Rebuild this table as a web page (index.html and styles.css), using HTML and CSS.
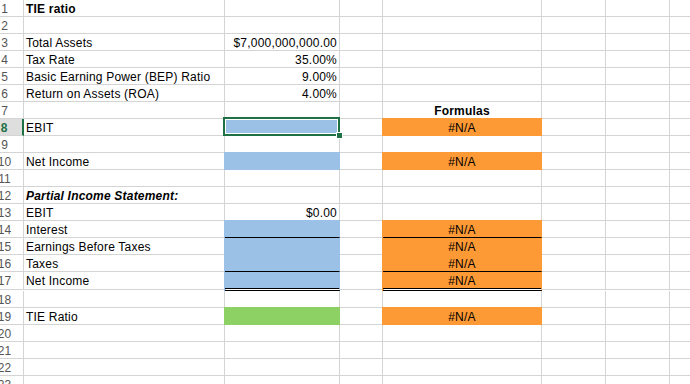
FILE: index.html
```html
<!DOCTYPE html>
<html>
<head>
<meta charset="utf-8">
<title>TIE ratio</title>
<link rel="stylesheet" href="styles.css">
</head>
<body>
<div class="sheet">
  <div class="row"><div class="h">1</div><div class="c b">TIE ratio</div><div class="c"></div><div class="c"></div><div class="c"></div><div class="c"></div><div class="c"></div><div class="c"></div></div>
  <div class="row"><div class="h">2</div><div class="c"></div><div class="c"></div><div class="c"></div><div class="c"></div><div class="c"></div><div class="c"></div><div class="c"></div></div>
  <div class="row"><div class="h">3</div><div class="c">Total Assets</div><div class="c num">$7,000,000,000.00</div><div class="c"></div><div class="c"></div><div class="c"></div><div class="c"></div><div class="c"></div></div>
  <div class="row"><div class="h">4</div><div class="c">Tax Rate</div><div class="c num">35.00%</div><div class="c"></div><div class="c"></div><div class="c"></div><div class="c"></div><div class="c"></div></div>
  <div class="row"><div class="h">5</div><div class="c">Basic Earning Power (BEP) Ratio</div><div class="c num">9.00%</div><div class="c"></div><div class="c"></div><div class="c"></div><div class="c"></div><div class="c"></div></div>
  <div class="row"><div class="h">6</div><div class="c">Return on Assets (ROA)</div><div class="c num">4.00%</div><div class="c"></div><div class="c"></div><div class="c"></div><div class="c"></div><div class="c"></div></div>
  <div class="row"><div class="h">7</div><div class="c"></div><div class="c"></div><div class="c"></div><div class="c ctr b">Formulas</div><div class="c"></div><div class="c"></div><div class="c"></div></div>
  <div class="row"><div class="h sel">8</div><div class="c">EBIT</div><div class="c blue active"><span class="handle"></span></div><div class="c"></div><div class="c ctr orange">#N/A</div><div class="c"></div><div class="c"></div><div class="c"></div></div>
  <div class="row"><div class="h">9</div><div class="c"></div><div class="c"></div><div class="c"></div><div class="c"></div><div class="c"></div><div class="c"></div><div class="c"></div></div>
  <div class="row"><div class="h">10</div><div class="c">Net Income</div><div class="c blue"></div><div class="c"></div><div class="c ctr orange">#N/A</div><div class="c"></div><div class="c"></div><div class="c"></div></div>
  <div class="row"><div class="h">11</div><div class="c"></div><div class="c"></div><div class="c"></div><div class="c"></div><div class="c"></div><div class="c"></div><div class="c"></div></div>
  <div class="row"><div class="h">12</div><div class="c bi">Partial Income Statement:</div><div class="c"></div><div class="c"></div><div class="c"></div><div class="c"></div><div class="c"></div><div class="c"></div></div>
  <div class="row"><div class="h">13</div><div class="c">EBIT</div><div class="c num">$0.00</div><div class="c"></div><div class="c"></div><div class="c"></div><div class="c"></div><div class="c"></div></div>
  <div class="row"><div class="h">14</div><div class="c">Interest</div><div class="c blue bk"></div><div class="c"></div><div class="c ctr orange bk">#N/A</div><div class="c"></div><div class="c"></div><div class="c"></div></div>
  <div class="row"><div class="h">15</div><div class="c">Earnings Before Taxes</div><div class="c blue notop"></div><div class="c"></div><div class="c ctr orange notop">#N/A</div><div class="c"></div><div class="c"></div><div class="c"></div></div>
  <div class="row"><div class="h">16</div><div class="c">Taxes</div><div class="c blue bk"></div><div class="c"></div><div class="c ctr orange bk">#N/A</div><div class="c"></div><div class="c"></div><div class="c"></div></div>
  <div class="row tall"><div class="h">17</div><div class="c">Net Income</div><div class="c blue notop dbl"></div><div class="c"></div><div class="c ctr orange notop dbl">#N/A</div><div class="c"></div><div class="c"></div><div class="c"></div></div>
  <div class="row"><div class="h">18</div><div class="c"></div><div class="c"></div><div class="c"></div><div class="c"></div><div class="c"></div><div class="c"></div><div class="c"></div></div>
  <div class="row"><div class="h">19</div><div class="c">TIE Ratio</div><div class="c green"></div><div class="c"></div><div class="c ctr orange">#N/A</div><div class="c"></div><div class="c"></div><div class="c"></div></div>
  <div class="row"><div class="h">20</div><div class="c"></div><div class="c"></div><div class="c"></div><div class="c"></div><div class="c"></div><div class="c"></div><div class="c"></div></div>
  <div class="row"><div class="h">21</div><div class="c"></div><div class="c"></div><div class="c"></div><div class="c"></div><div class="c"></div><div class="c"></div><div class="c"></div></div>
  <div class="row"><div class="h">22</div><div class="c"></div><div class="c"></div><div class="c"></div><div class="c"></div><div class="c"></div><div class="c"></div><div class="c"></div></div>
  <div class="row"><div class="h">23</div><div class="c"></div><div class="c"></div><div class="c"></div><div class="c"></div><div class="c"></div><div class="c"></div><div class="c"></div></div>
</div>
</body>
</html>
```

FILE: styles.css
```css
html, body {
  margin: 0;
  padding: 0;
  background: #ffffff;
  overflow: hidden;
  width: 690px;
  height: 384px;
}

.sheet {
  margin-left: -15px;
  font-family: "Liberation Sans", Arial, sans-serif;
  font-size: 12px;
  color: #000;
}

.row {
  display: grid;
  grid-template-columns: 39px 201px 115px 43px 159px 64px 64px 120px;
  height: 17px;
}

.row.tall {
  height: 19px;
}

.row.tall > div:not(.dbl) {
  height: 18px;
  align-self: start;
}

.h, .c {
  box-sizing: border-box;
  border-right: 1px solid #d4d4d4;
  border-bottom: 1px solid #d4d4d4;
  padding: 2px 2px 0 2px;
  line-height: 14px;
  white-space: nowrap;
}

.h {
  text-align: center;
  color: #555555;
  padding-left: 1px;
  padding-right: 0;
}

.h.sel {
  background: #dedede;
  color: #1e7145;
  font-weight: bold;
  border-right: 2px solid #1e7145;
}

.c {
  letter-spacing: 0.2px;
}

.num { text-align: right; }
.ctr { text-align: center; }
.b { font-weight: bold; }
.bi { font-weight: bold; font-style: italic; }

.blue {
  background: #9bc2e6;
  border-color: #9bc2e6;
  box-shadow: -1px -1px 0 #9bc2e6, 0 -1px 0 #9bc2e6, -1px 0 0 #9bc2e6;
}

.orange {
  background: #fd9a35;
  border-color: #fd9a35;
  box-shadow: -1px -1px 0 #fd9a35, 0 -1px 0 #fd9a35, -1px 0 0 #fd9a35;
}

.green {
  background: #8dd165;
  border-color: #8dd165;
  box-shadow: -1px -1px 0 #8dd165, 0 -1px 0 #8dd165, -1px 0 0 #8dd165;
}

.blue.notop { box-shadow: -1px 0 0 #9bc2e6; }
.orange.notop { box-shadow: -1px 0 0 #fd9a35; }

.bk {
  border-bottom-color: #000000;
}

.dbl {
  border-bottom: 3px double #000000;
  background-clip: padding-box;
}

.active {
  position: relative;
}

.active::before {
  content: "";
  position: absolute;
  left: -2px;
  top: -2px;
  right: -1px;
  bottom: -1px;
  border: 2px solid #1e7145;
  box-shadow: inset 0 0 0 1px #ffffff;
}

.handle {
  position: absolute;
  right: -4px;
  bottom: -4px;
  width: 5px;
  height: 5px;
  background: #1e7145;
  border: 1px solid #ffffff;
  z-index: 1;
}
```
